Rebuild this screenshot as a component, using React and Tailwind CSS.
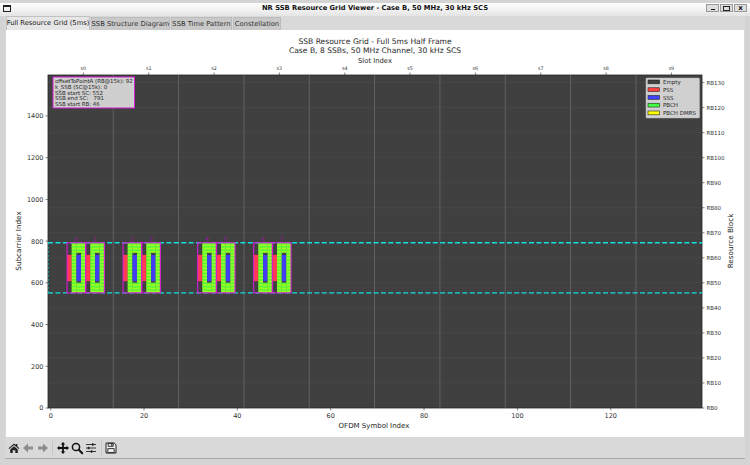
const F = "'DejaVu Sans', sans-serif";
const X = (s) => 50.7 + 4.667 * s;
const Y = (v) => 408 - 0.2086 * v;

const ssbStarts = [4, 8, 16, 20, 32, 36, 44, 48];
const yTicks = [0, 200, 400, 600, 800, 1000, 1200, 1400];
const xTicks = [0, 20, 40, 60, 80, 100, 120];
const rbTicks = Array.from({ length: 14 }, (_, i) => i * 10);
const slots = Array.from({ length: 10 }, (_, i) => i);
const legend = [
  ["Empty", "#404040"],
  ["PSS", "#ff4040"],
  ["SSS", "#4040ff"],
  ["PBCH", "#40ff40"],
  ["PBCH DMRS", "#ffff00"],
];
const info = [
  "offsetToPointA (RB@15k): 92",
  "k_SSB (SC@15k): 0",
  "SSB start SC: 552",
  "SSB end SC:   791",
  "SSB start RB: 46",
];

function Pbch({ x, y, w, h }) {
  const rows = [];
  for (let p = y; p < y + h; p += 3.3) {
    rows.push(<rect key={p} x={x} y={p} width={w} height={Math.min(1.6, y + h - p)} fill="#58f838" />);
  }
  return (
    <g>
      <rect x={x} y={y} width={w} height={h} fill="#9cff24" />
      {rows}
    </g>
  );
}

function Ssb({ start, index }) {
  const x0 = X(start - 0.5);
  const sw = 4.667;
  const top = Y(792);
  const bot = Y(552);
  const h = bot - top;
  return (
    <g>
      <rect x={x0} y={Y(734)} width={sw} height={Y(608) - Y(734)} fill="#ff3c50" />
      <Pbch x={x0 + sw} y={top} w={sw} h={h} />
      <Pbch x={x0 + 2 * sw} y={top} w={sw} h={Y(744) - top} />
      <Pbch x={x0 + 2 * sw} y={Y(600)} w={sw} h={bot - Y(600)} />
      <rect x={x0 + 2 * sw} y={Y(734)} width={sw} height={Y(608) - Y(734)} fill="#4040f0" />
      <Pbch x={x0 + 3 * sw} y={top} w={sw} h={h} />
      <rect x={x0} y={top} width={4 * sw} height={h} fill="none" stroke="#d818d8" strokeWidth="1.1" />
      <text x={x0 + 2 * sw} y={top - 2} fontSize="5.5" fill="#a010a0" textAnchor="middle">{index}</text>
    </g>
  );
}

function Chart() {
  return (
    <svg viewBox="6 30 738 407" className="block w-full h-full" style={{ fontFamily: F }}>
      <g fill="#262626" textAnchor="middle">
        <text x="375" y="44" fontSize="7.6">SSB Resource Grid - Full 5ms Half Frame</text>
        <text x="375" y="52.8" fontSize="7.6">Case B, 8 SSBs, 50 MHz Channel, 30 kHz SCS</text>
        <text x="375" y="62.5" fontSize="6.8">Slot Index</text>
        <text x="374" y="427.5" fontSize="7">OFDM Symbol Index</text>
        <text transform="translate(20.5 241) rotate(-90)" fontSize="7.2">Subcarrier Index</text>
        <text transform="translate(732.5 241) rotate(-90)" fontSize="7.2">Resource Block</text>
      </g>

      <rect x="48" y="75" width="654" height="333" fill="#404040" stroke="#262626" strokeWidth="0.8" />
      {rbTicks.slice(1).map((r) => (
        <line key={r} x1="48" x2="702" y1={Y(r * 12)} y2={Y(r * 12)} stroke="#4c4c4c" strokeWidth="0.6" />
      ))}
      {slots.slice(0, 9).map((i) => (
        <line key={i} x1={X(13.4 + 14 * i)} x2={X(13.4 + 14 * i)} y1="75" y2="408" stroke="#6a6a6a" strokeWidth="0.8" />
      ))}

      <line x1="48" x2="702" y1={Y(792)} y2={Y(792)} stroke="#10e0e0" strokeWidth="1.4" strokeDasharray="5 2.4" />
      <line x1="48" x2="702" y1={Y(552)} y2={Y(552)} stroke="#10e0e0" strokeWidth="1.4" strokeDasharray="5 2.4" />
      <line x1="48.5" x2="48.5" y1={Y(792)} y2={Y(552)} stroke="#10a8a8" strokeWidth="0.8" strokeDasharray="2 2" />

      {ssbStarts.map((s, i) => <Ssb key={s} start={s} index={i} />)}

      {yTicks.map((v) => (
        <g key={v}>
          <line x1="45.5" x2="48" y1={Y(v)} y2={Y(v)} stroke="#333" strokeWidth="0.6" />
          <text x="43.5" y={Y(v) + 2.4} fontSize="6.5" fill="#333" textAnchor="end">{v}</text>
        </g>
      ))}
      {xTicks.map((v) => (
        <g key={v}>
          <line x1={X(v)} x2={X(v)} y1="408" y2="410.5" stroke="#333" strokeWidth="0.6" />
          <text x={X(v)} y="418.4" fontSize="6.5" fill="#333" textAnchor="middle">{v}</text>
        </g>
      ))}
      {rbTicks.map((r) => (
        <g key={r}>
          <line x1="702" x2="704.5" y1={Y(r * 12)} y2={Y(r * 12)} stroke="#333" strokeWidth="0.6" />
          <text x="706.5" y={Y(r * 12) + 2} fontSize="5.5" fill="#333">{"RB" + r}</text>
        </g>
      ))}
      {slots.map((i) => (
        <g key={i}>
          <line x1={X(7 + 14 * i)} x2={X(7 + 14 * i)} y1="72.5" y2="75" stroke="#333" strokeWidth="0.6" />
          <text x={X(7 + 14 * i)} y="70" fontSize="4.8" fill="#333" textAnchor="middle">{"s" + i}</text>
        </g>
      ))}

      <rect x="53" y="77" width="81.5" height="31" fill="#cfcfcf" stroke="#d020d0" strokeWidth="1" />
      {info.map((t, i) => (
        <text key={i} x="55" y={83 + i * 5.75} fontSize="5.45" fill="#262626" xmlSpace="preserve">{t}</text>
      ))}

      <rect x="646" y="78" width="53.5" height="40" rx="1" fill="#d0d0d0" stroke="#bbb" strokeWidth="0.5" />
      {legend.map(([t, c], i) => (
        <g key={t}>
          <rect x="648" y={80 + i * 7.75} width="11.5" height="3.8" fill={c} stroke="#262626" strokeWidth="0.6" />
          <text x="663" y={84.2 + i * 7.75} fontSize="5.5" fill="#262626">{t}</text>
        </g>
      ))}
    </svg>
  );
}

function Tool({ children }) {
  return (
    <svg width="14" height="14" viewBox="0 0 14 14" className="block shrink-0">{children}</svg>
  );
}

function Sep() {
  return <div className="w-px h-[14px] bg-[#c4c4c4] mx-[2px]" />;
}

function Toolbar() {
  return (
    <div className="h-[21px] shrink-0 flex items-center pl-px gap-[0.4px]">
      <Tool>
        <path d="M7 2.4 1.6 7.2l.7.8L7 3.9 11.7 8l.7-.8-2-1.8V3H8.8v1ZM3.2 8.6 7 5.3l3.8 3.3v3.4H8.3V9.2H5.7V12H3.2Z" fill="#222" />
      </Tool>
      <Tool>
        <path d="M2 7 7 2.6v2.8h5v3.2H7v2.8Z" fill="#8c8c8c" />
      </Tool>
      <Tool>
        <path d="M12 7 7 2.6v2.8H2v3.2h5v2.8Z" fill="#8c8c8c" />
      </Tool>
      <Sep />
      <Tool>
        <path d="M7 1 9.3 3.4H7.9V6.1h2.7V4.7L13 7l-2.4 2.3V7.9H7.9v2.7h1.4L7 13l-2.3-2.4h1.4V7.9H3.4v1.4L1 7l2.4-2.3v1.4h2.7V3.4H4.7Z" fill="#111" />
      </Tool>
      <Tool>
        <circle cx="6" cy="6" r="3.6" fill="none" stroke="#111" strokeWidth="1.5" />
        <path d="m8.8 8.8 3.4 3.4" stroke="#111" strokeWidth="2" strokeLinecap="round" />
      </Tool>
      <Tool>
        <path d="M2 3.5h10M2 7h10M2 10.5h10" stroke="#222" strokeWidth="0.9" />
        <path d="M8 2.2h1.6v2.6H8ZM3.8 5.7h1.6v2.6H3.8ZM6.8 9.2h1.6v2.6H6.8Z" fill="#222" />
      </Tool>
      <Sep />
      <Tool>
        <path d="M2 2h8.2L12 3.8V12H2Z" fill="#eee" stroke="#222" strokeWidth="1" />
        <path d="M4.2 2.3h5v3H4.2ZM3.8 7.6h6.4V11.7H3.8Z" fill="none" stroke="#222" strokeWidth="0.9" />
        <path d="M7.2 2.9h1.2v1.9H7.2Z" fill="#222" />
      </Tool>
    </div>
  );
}

function WinButton({ children }) {
  return (
    <div className="w-[13px] h-[8px] border border-[#9a9a9a] bg-[#dedede] flex items-center justify-center">{children}</div>
  );
}

function Tab({ label, active, w }) {
  return (
    <div
      className={
        active
          ? "h-[14px] flex items-center justify-center bg-[#e6e6e6] border border-b-0 border-[#c2c2c2] text-[#222]"
          : "h-[13px] flex items-center justify-center bg-[#c9c9c9] border border-b-0 border-[#bcbcbc] text-[#333]"
      }
      style={{ width: w }}
    >
      {label}
    </div>
  );
}

export default function App() {
  return (
    <div
      className="w-[750px] h-[465px] overflow-hidden flex flex-col bg-[#d4d4d4] pt-[3px]"
      style={{ fontFamily: F }}
    >
      <div className="h-[13px] shrink-0 flex items-center justify-between bg-gradient-to-b from-white to-[#e4e4e4] pl-[3px] pr-[3px] pb-[3px] relative">
        <div className="w-[8px] h-[7px] border border-[#222] border-t-2" />
        <div className="absolute inset-0 pb-[3px] flex items-center justify-center text-[6.75px] font-bold text-[#111] whitespace-nowrap">
          NR SSB Resource Grid Viewer - Case B, 50 MHz, 30 kHz SCS
        </div>
        <div className="flex gap-[1px] relative">
          <WinButton><div className="w-[4px] h-px bg-[#111] mt-[3px]" /></WinButton>
          <WinButton><div className="w-[7px] h-[5px] border border-[#222]" /></WinButton>
          <WinButton><span className="text-[7px] leading-none font-bold text-[#111]">x</span></WinButton>
        </div>
      </div>

      <div className="flex flex-col mx-[5px] px-px bg-[#d9d9d9] border-b border-[#a8a8a8]">
        <div className="h-[14px] shrink-0 flex items-end gap-px text-[6.75px] whitespace-nowrap">
          <Tab label="Full Resource Grid (5ms)" active w={84} />
          <Tab label="SSB Structure Diagram" w={79} />
          <Tab label="SSB Time Pattern" w={61} />
          <Tab label="Constellation" w={48} />
        </div>
        <div className="h-[407px] shrink-0 bg-white"><Chart /></div>
        <Toolbar />
      </div>
    </div>
  );
}
